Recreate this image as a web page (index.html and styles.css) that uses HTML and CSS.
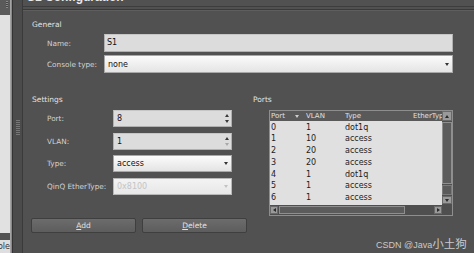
FILE: index.html
```html
<!DOCTYPE html>
<html>
<head>
<meta charset="utf-8">
<link rel="stylesheet" href="styles.css">
</head>
<body>
<div class="app">
  <div class="side">
    <div class="side-top"><div class="grip"></div></div>
    <div class="side-body"></div>
    <div class="side-band"></div>
    <div class="side-foot"><span>Console</span></div>
  </div>
  <div class="side-edge"></div>
  <div class="splitter"><div class="dots"></div></div>
  <div class="main">
    <div class="title"><span>S1 Configuration</span></div>
    <div class="rule"></div>
    <div class="panel">
      <div class="sect-title">General</div>
      <div class="form-row first"><label>Name:</label><div class="input wide">S1</div></div>
      <div class="form-row second"><label>Console type:</label><div class="combo wide"><span>none</span><i class="arrow"></i></div></div>
      <div class="cols">
        <div class="col-left">
          <div class="sect-title">Settings</div>
          <div class="fields">
            <div class="field"><label>Port:</label><div class="spin"><span>8</span><div class="spin-btns"><i class="tri-up"></i><i class="tri-down"></i></div></div></div>
            <div class="field"><label>VLAN:</label><div class="spin"><span>1</span><div class="spin-btns"><i class="tri-up"></i><i class="tri-down off"></i></div></div></div>
            <div class="field"><label>Type:</label><div class="combo"><span>access</span><i class="arrow"></i></div></div>
            <div class="field"><label>QinQ EtherType:</label><div class="combo disabled"><span>0x8100</span><i class="arrow"></i></div></div>
          </div>
          <div class="buttons">
            <div class="btn"><u>A</u>dd</div>
            <div class="btn"><u>D</u>elete</div>
          </div>
        </div>
        <div class="col-right">
          <div class="sect-title">Ports</div>
          <div class="table">
            <div class="view">
              <div class="thead">
                <div class="th c1">Port<i class="sort"></i></div>
                <div class="th c2">VLAN</div>
                <div class="th c3">Type</div>
                <div class="th c4">EtherType</div>
              </div>
              <div class="tbody">
                <div class="tr"><span class="c1">0</span><span class="c2">1</span><span class="c3">dot1q</span></div>
                <div class="tr"><span class="c1">1</span><span class="c2">10</span><span class="c3">access</span></div>
                <div class="tr"><span class="c1">2</span><span class="c2">20</span><span class="c3">access</span></div>
                <div class="tr"><span class="c1">3</span><span class="c2">20</span><span class="c3">access</span></div>
                <div class="tr"><span class="c1">4</span><span class="c2">1</span><span class="c3">dot1q</span></div>
                <div class="tr"><span class="c1">5</span><span class="c2">1</span><span class="c3">access</span></div>
                <div class="tr"><span class="c1">6</span><span class="c2">1</span><span class="c3">access</span></div>
              </div>
            </div>
            <div class="vscroll">
              <div class="sb-btn v"><i class="t-up"></i></div>
              <div class="sb-slider"></div>
              <div class="sb-box"></div>
              <div class="sb-btn v small"><i class="t-down"></i></div>
            </div>
            <div class="hscroll">
              <div class="sb-btn h"><i class="t-left"></i></div>
              <div class="sb-slider hz"></div>
              <div class="sb-track"></div>
              <div class="sb-btn h"><i class="t-right"></i></div>
            </div>
            <div class="corner"></div>
          </div>
        </div>
      </div>
    </div>
  </div>
  <div class="watermark">CSDN @Java<span class="cjk">小土狗</span></div>
</div>
</body>
</html>
```
FILE: styles.css
```css
* { box-sizing: border-box; }
html, body { margin: 0; padding: 0; }
body {
  width: 474px; height: 253px; overflow: hidden;
  background: #515151;
  font-family: "DejaVu Sans", sans-serif;
  font-size: 8px;
  color: #d4d4d4;
}
.app { display: flex; height: 253px; position: relative; }

.side { width: 10px; display: flex; flex-direction: column; flex: none; }
.side-top { height: 15px; background: #5a5a5a; }
.grip {
  width: 2px; height: 7px; margin: 1px 0 0 6px;
  background: repeating-linear-gradient(to bottom, #8a8a8a 0 1px, #444 1px 2px);
}
.side-body { flex: 1; background: #e1e1e1; }
.side-band { height: 7px; background: #525252; }
.side-foot {
  height: 13px; background: #dedede; color: #333;
  display: flex; justify-content: flex-end; align-items: center;
  overflow: hidden; white-space: nowrap; font-size: 8px;
}
.side-edge {
  width: 3px; flex: none;
  background: linear-gradient(to right, #a4a4a4 0 1px, #8a8a8a 1px 2px, #333 2px 3px);
}
.splitter { width: 10px; flex: none; background: #4b4b4b; border-right: 1px solid #3a3a3a; }
.dots {
  width: 4px; height: 15px; margin: 120px 0 0 3px;
  background: repeating-linear-gradient(to bottom, #777 0 1px, transparent 1px 2px);
}

.main { flex: 1; min-width: 0; display: flex; flex-direction: column; }
.title { height: 6px; overflow: hidden; }
.title span {
  display: block; margin-top: -10px; padding-left: 4px;
  font: bold 12px/14px "Liberation Sans", sans-serif; color: #e8e8e8; white-space: nowrap;
}
.rule { height: 3px; border-top: 1px solid #3d3d3d; }
.panel {
  flex: 1;
  border-top: 1px solid #3a3a3a;
  box-shadow: inset 0 1px 0 #5e5e5e;
  padding: 10px 0 0 9px;
}
.sect-title { height: 10px; line-height: 10px; color: #e2e2e2; font-size: 7.5px; }

label { font-size: 7.3px; white-space: nowrap; color: #d2d2d2; }
.form-row { display: flex; align-items: center; height: 18px; margin-left: 15px; }
.form-row.first { margin-top: 4px; }
.form-row.second { margin-top: 3px; }
.form-row label { width: 57px; flex: none; }
.wide { width: 349px; height: 18px; }

.input {
  background: #dcdcdc; border: 1px solid #b0b0b0; border-top-color: #c6c6c6;
  color: #111; padding-left: 2px; line-height: 16px;
}
.combo {
  background: linear-gradient(#fbfbfb, #e4e4e4);
  border: 1px solid #a8a8a8; color: #111;
  display: flex; justify-content: space-between; align-items: center;
  padding: 0 3px 0 3px;
}
.arrow {
  width: 0; height: 0;
  border-left: 2.5px solid transparent; border-right: 2.5px solid transparent;
  border-top: 3px solid #333;
}
.combo.disabled { background: linear-gradient(#f3f3f3, #e7e7e7); color: #c4c4c4; border-color: #b8b8b8; }
.combo.disabled .arrow { border-top-color: #c2c2c2; }

.cols { display: flex; margin-top: 22px; }
.col-left { width: 221px; flex: none; }
.fields { margin: 5px 0 0 15px; display: flex; flex-direction: column; gap: 5.5px; }
.field { display: flex; align-items: center; height: 17px; }
.field label { width: 66px; flex: none; }
.field .spin, .field .combo { width: 119px; height: 17px; }
.spin {
  background: #dcdcdc; border: 1px solid #b0b0b0; border-top-color: #c6c6c6; color: #111;
  display: flex; justify-content: space-between; align-items: center; padding: 0 2px 0 3px;
}
.spin-btns { display: flex; flex-direction: column; gap: 3px; align-items: center; }
.tri-up { width: 0; height: 0; border-left: 2.5px solid transparent; border-right: 2.5px solid transparent; border-bottom: 3px solid #3a3a3a; }
.tri-down { width: 0; height: 0; border-left: 2.5px solid transparent; border-right: 2.5px solid transparent; border-top: 3px solid #3a3a3a; }
.tri-down.off { border-top-color: #a8a8a8; }

.buttons { display: flex; gap: 6px; margin: 23.5px 0 0 -1px; }
.btn {
  width: 105px; height: 15px;
  background: linear-gradient(#6c6c6c, #5d5d5d);
  border: 1px solid #3f3f3f; border-radius: 2px;
  color: #e2e2e2; text-align: center; line-height: 13px; font-size: 7.5px;
}

.col-right { flex: 1; }
.table {
  margin: 5px 0 0 16px; width: 184px; height: 106px;
  border: 1px solid #8e8e8e; background: #4f4f4f;
  display: grid; grid-template-columns: 1fr 10px; grid-template-rows: 1fr 10px;
}
.view { background: #e0e0e0; overflow: hidden; }
.thead { display: flex; height: 10px; background: #595959; color: #e0e0e0; font-size: 7px; line-height: 10px; }
.th { white-space: nowrap; overflow: hidden; }
.c1 { width: 36px; padding-left: 1px; flex: none; }
.c2 { width: 39px; flex: none; }
.c3 { width: 68px; flex: none; }
.c4 { flex: 1; }
.sort {
  display: inline-block; vertical-align: middle; margin-left: 10px;
  width: 0; height: 0;
  border-left: 2px solid transparent; border-right: 2px solid transparent; border-top: 3px solid #cfcfcf;
}
.tbody { display: flex; flex-direction: column; padding-top: 0.5px; }
.tr { display: flex; height: 11.8px; line-height: 11.8px; color: #1c1c1c; }
.tr span { display: block; }

.vscroll { display: flex; flex-direction: column; }
.sb-btn {
  background: #9a9a9a; border: 1px solid #6a6a6a;
  display: flex; align-items: center; justify-content: center;
}
.sb-btn.v { height: 10px; }
.sb-btn.v.small { height: 8px; margin-bottom: 1px; }
.sb-btn.h { width: 8px; }
.sb-slider { flex: 1; background: #5c5c5c; border: 1px solid #8f8f8f; margin: 1px 0; }
.sb-box { height: 10px; background: #5a5a5a; border: 1px solid #7a7a7a; margin-bottom: 1px; }
.hscroll { display: flex; padding: 1px 0; }
.sb-slider.hz { flex: none; width: 126px; margin: 0 1px; }
.sb-track { flex: 1; }
.corner { background: #4f4f4f; }
.t-up { width: 0; height: 0; border-left: 2px solid transparent; border-right: 2px solid transparent; border-bottom: 3px solid #2a2a2a; }
.t-down { width: 0; height: 0; border-left: 2px solid transparent; border-right: 2px solid transparent; border-top: 3px solid #2a2a2a; }
.t-left { width: 0; height: 0; border-top: 2px solid transparent; border-bottom: 2px solid transparent; border-right: 3px solid #2a2a2a; }
.t-right { width: 0; height: 0; border-top: 2px solid transparent; border-bottom: 2px solid transparent; border-left: 3px solid #2a2a2a; }

.watermark {
  position: absolute; left: 376px; top: 236px;
  font: 9px/14px "Liberation Sans", "Noto Sans CJK SC", sans-serif;
  color: #cacaca; white-space: nowrap;
}
.watermark .cjk { font-family: "Noto Sans CJK SC", sans-serif; font-size: 11.5px; }
```
